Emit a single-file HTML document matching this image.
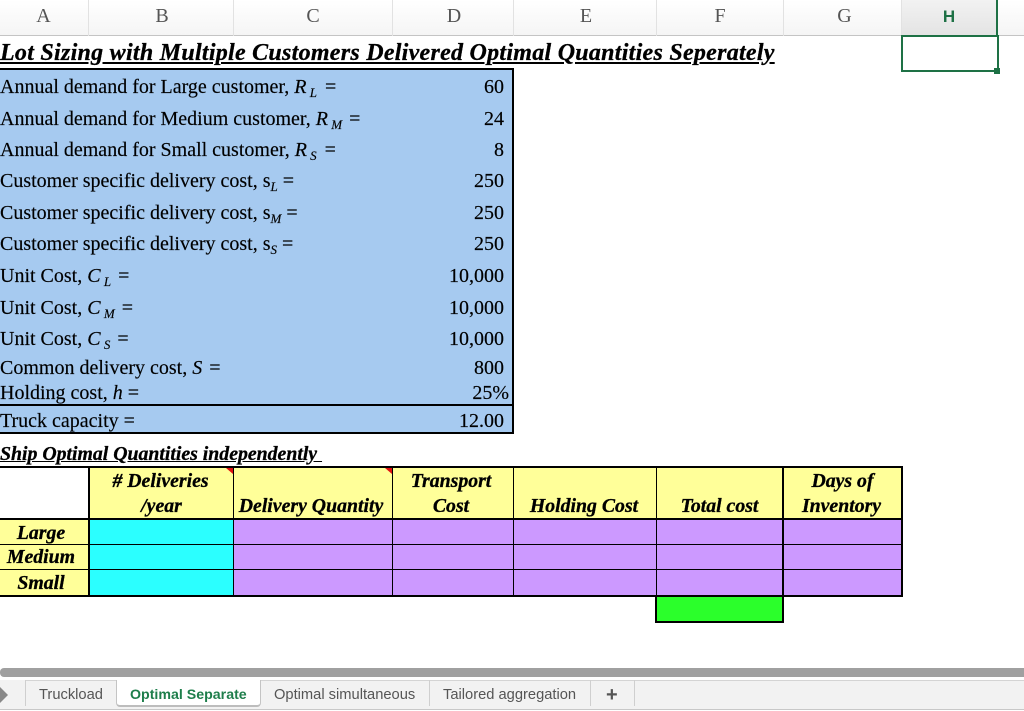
<!DOCTYPE html>
<html><head><meta charset="utf-8">
<style>
html,body{margin:0;padding:0;background:#fff}
body{width:1024px;height:711px;position:relative;overflow:hidden;font-family:"Liberation Serif",serif;color:#000}
.a{position:absolute}
.t{position:absolute;white-space:nowrap;font-size:20px;line-height:24px;color:#000;-webkit-text-stroke:.15px #000}
.r{text-align:right;right:520px}
.h{position:absolute;top:0;height:36px;line-height:33px;text-align:center;font-size:20px;color:#555;border-right:1px solid #e2e2e2;box-sizing:border-box}
.b{font-weight:bold;font-style:italic;font-size:19.8px;text-align:center;position:absolute;white-space:nowrap;line-height:24px;color:#000;-webkit-text-stroke:.3px #000}
sub{font-size:13px;line-height:0;vertical-align:-4px;font-style:italic}
.s{position:absolute;top:680px;white-space:nowrap;font:14.7px/30px "Liberation Sans",sans-serif;color:#555}
.k{position:absolute;background:#000}
</style></head><body>
<div class="a" style="left:0;top:0;width:1024px;height:35px;background:linear-gradient(#fff,#f5f5f5);border-bottom:1px solid #c4c4c4"></div>
<div class="h" style="left:0;width:89px;padding-right:1px">A</div>
<div class="h" style="left:89px;width:145px;padding-left:2px">B</div>
<div class="h" style="left:234px;width:159px;">C</div>
<div class="h" style="left:393px;width:121px;padding-left:2px">D</div>
<div class="h" style="left:514px;width:143px;padding-left:2px">E</div>
<div class="h" style="left:657px;width:127px;">F</div>
<div class="h" style="left:784px;width:118px;padding-left:4px">G</div>
<div class="a" style="left:902px;top:0;width:94px;height:35px;background:linear-gradient(#f2f2f2,#e4e4e4);text-align:center;font:bold 17px/33px 'Liberation Sans',sans-serif;color:#1e7145">H</div>
<div class="a" style="left:996px;top:0;width:2px;height:36px;background:#1e7145"></div>
<div class="a" style="left:901px;top:35px;width:94px;height:33px;border:2px solid #1e7145"></div>
<div class="a" style="left:994px;top:68px;width:6px;height:6px;background:#1e7145"></div>

<div class="t" style="left:0;top:41px;font-size:24px;letter-spacing:.27px;font-weight:bold;font-style:italic;text-decoration:underline;-webkit-text-stroke:.3px #000">Lot Sizing with Multiple Customers Delivered Optimal Quantities Seperately</div>

<div class="a" style="left:0;top:68px;width:514px;height:366px;background:#a6caf0"></div>
<div class="k" style="left:0;top:68px;width:514px;height:2px"></div>
<div class="k" style="left:512px;top:68px;width:2px;height:366px"></div>
<div class="k" style="left:0;top:404px;width:514px;height:2px"></div>
<div class="k" style="left:0;top:432px;width:514px;height:2px"></div>

<div class="t" style="left:0;top:75px">Annual demand for Large customer, <i>R<sub> L</sub></i> <span style="margin-left:3px">=</span></div><div class="t r" style="top:75px">60</div>
<div class="t" style="left:0;top:107px">Annual demand for Medium customer, <i>R<sub> M</sub></i> <span style="margin-left:2px">=</span></div><div class="t r" style="top:107px">24</div>
<div class="t" style="left:0;top:138px">Annual demand for Small customer, <i>R<sub> S</sub></i> <span style="margin-left:3px">=</span></div><div class="t r" style="top:138px">8</div>
<div class="t" style="left:0;top:169px">Customer specific delivery cost, s<sub>L</sub> =</div><div class="t r" style="top:169px">250</div>
<div class="t" style="left:0;top:201px">Customer specific delivery cost, s<sub>M</sub> =</div><div class="t r" style="top:201px">250</div>
<div class="t" style="left:0;top:232px">Customer specific delivery cost, s<sub>S</sub> =</div><div class="t r" style="top:232px">250</div>
<div class="t" style="left:0;top:264px">Unit Cost, <i>C<sub> L</sub></i> <span style="margin-left:2px">=</span></div><div class="t r" style="top:264px">10,000</div>
<div class="t" style="left:0;top:296px">Unit Cost, <i>C<sub> M</sub></i> <span style="margin-left:2px">=</span></div><div class="t r" style="top:296px">10,000</div>
<div class="t" style="left:0;top:327px">Unit Cost, <i>C<sub> S</sub></i> <span style="margin-left:2px">=</span></div><div class="t r" style="top:327px">10,000</div>
<div class="t" style="left:0;top:356px">Common delivery cost, <i>S</i> <span style="margin-left:2px">=</span></div><div class="t r" style="top:356px">800</div>
<div class="t" style="left:0;top:381px">Holding cost, <i>h</i> =</div><div class="t" style="right:515px;top:381px">25%</div>
<div class="t" style="left:0;top:409px">Truck capacity =</div><div class="t r" style="top:409px">12.00</div>

<div class="t" style="left:0;top:442px;font-size:19.8px;font-weight:bold;font-style:italic;text-decoration:underline;-webkit-text-stroke:.3px #000">Ship Optimal Quantities independently&nbsp;</div>

<div class="a" style="left:89px;top:467px;width:813px;height:52px;background:#ffff99"></div>
<div class="a" style="left:0;top:519px;width:89px;height:76px;background:#ffff99"></div>
<div class="a" style="left:89px;top:519px;width:145px;height:76px;background:#2bffff"></div>
<div class="a" style="left:234px;top:519px;width:668px;height:76px;background:#cc99ff"></div>
<div class="a" style="left:657px;top:595px;width:126px;height:27px;background:#2bff2b"></div>

<div class="k" style="left:0;top:466px;width:903px;height:2px"></div>
<div class="k" style="left:0;top:518px;width:903px;height:2px"></div>
<div class="k" style="left:0;top:544px;width:903px;height:1px"></div>
<div class="k" style="left:0;top:569px;width:903px;height:1px"></div>
<div class="k" style="left:0;top:595px;width:903px;height:2px"></div>
<div class="k" style="left:88px;top:466px;width:2px;height:131px"></div>
<div class="k" style="left:233px;top:466px;width:1px;height:131px"></div>
<div class="k" style="left:392px;top:466px;width:1px;height:131px"></div>
<div class="k" style="left:513px;top:466px;width:1px;height:131px"></div>
<div class="k" style="left:656px;top:466px;width:1px;height:131px"></div>
<div class="k" style="left:782px;top:466px;width:2px;height:131px"></div>
<div class="k" style="left:901px;top:466px;width:2px;height:131px"></div>
<div class="k" style="left:655px;top:595px;width:2px;height:28px"></div>
<div class="k" style="left:782px;top:595px;width:2px;height:28px"></div>
<div class="k" style="left:655px;top:621px;width:129px;height:2px"></div>
<svg class="a" style="left:226px;top:468px" width="7" height="6"><path d="M0 0H7V6Z" fill="#e01010"/></svg>
<svg class="a" style="left:385px;top:468px" width="7" height="6"><path d="M0 0H7V6Z" fill="#e01010"/></svg>

<div class="b" style="left:89px;width:143px;top:469px">#&nbsp;Deliveries</div>
<div class="b" style="left:90px;width:143px;top:494px">/year</div>
<div class="b" style="left:232px;width:158px;top:494px">Delivery Quantity</div>
<div class="b" style="left:391px;width:120px;top:469px">Transport</div>
<div class="b" style="left:391px;width:120px;top:494px">Cost</div>
<div class="b" style="left:513px;width:142px;top:494px">Holding Cost</div>
<div class="b" style="left:657px;width:125px;top:494px">Total cost</div>
<div class="b" style="left:784px;width:117px;top:469px">Days of</div>
<div class="b" style="left:783px;width:117px;top:494px">Inventory</div>
<div class="b" style="left:0;width:82px;top:521px">Large</div>
<div class="b" style="left:0;width:82px;top:545px">Medium</div>
<div class="b" style="left:0;width:82px;top:571px">Small</div>

<div class="a" style="left:0;top:668px;width:1024px;height:9px;background:#a0a0a0;border-radius:4px 0 0 4px"></div>
<div class="a" style="left:0;top:680px;width:1024px;height:29px;background:#f2f2f2;border-top:1px solid #d4d4d4;box-sizing:border-box"></div>
<div class="a" style="left:0;top:680px;width:25px;height:1px;background:#f2f2f2"></div>
<div class="a" style="left:0;top:709px;width:1024px;height:1px;background:#c8c8c8"></div>
<div class="a" style="left:0;top:710px;width:1024px;height:1px;background:#fff"></div>
<svg class="a" style="left:0;top:687px" width="10" height="16"><path d="M0 0L8 8L0 16Z" fill="#888"/></svg>
<div class="a" style="left:25px;top:680px;width:1px;height:26px;background:#cfcfcf"></div>
<div class="a" style="left:116px;top:680px;width:145px;height:27px;background:#fff;border:1px solid #c4c4c4;border-top:0;border-bottom:2px solid #bdbdbd;border-radius:0 0 4px 4px;box-sizing:border-box"></div>
<div class="s" style="left:39px">Truckload</div>
<div class="s" style="left:130px;color:#1e7e4b;font-weight:bold;font-size:14.2px">Optimal Separate</div>
<div class="s" style="left:274px">Optimal simultaneous</div>
<div class="a" style="left:429px;top:680px;width:1px;height:26px;background:#cfcfcf"></div>
<div class="s" style="left:443px">Tailored aggregation</div>
<div class="a" style="left:590px;top:680px;width:1px;height:26px;background:#cfcfcf"></div>
<div class="s" style="left:606px;font-size:20px;font-weight:bold;color:#555">+</div>
<div class="a" style="left:634px;top:680px;width:1px;height:26px;background:#cfcfcf"></div>
</body></html>
